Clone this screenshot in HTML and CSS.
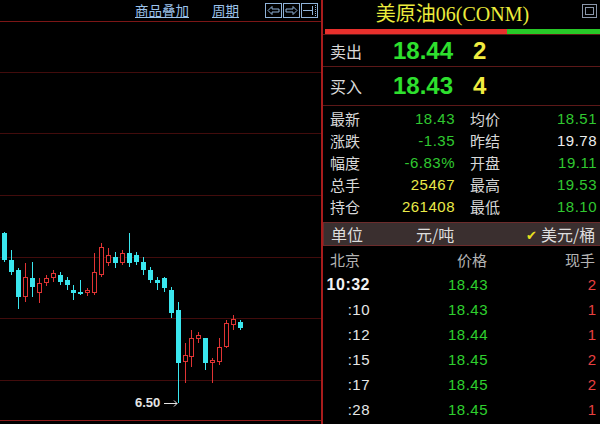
FILE: index.html
```html
<!DOCTYPE html>
<html lang="zh-CN">
  <head>
    <meta charset="UTF-8" />
    <meta name="viewport" content="width=device-width, initial-scale=1.0" />
    <title>美原油06 (CONM)</title>
    <link rel="stylesheet" href="styles.css">
  </head>
  <body>
    <div class="screen">
      <section class="chart">
        <div class="toolbar">
          <span class="tool-link">商品叠加</span>
          <span class="tool-link">周期</span>
          <div class="tool-btns">
            <span class="tool-btn">
              <svg viewBox="0 0 17 15"><rect x="0.5" y="0.5" width="16" height="14" /><path d="M3 7.5L7 3.5V6H14V9H7V11.5Z" /></svg>
            </span>
            <span class="tool-btn">
              <svg viewBox="0 0 17 15"><rect x="0.5" y="0.5" width="16" height="14" /><path d="M14 7.5L10 3.5V6H3V9H10V11.5Z" /></svg>
            </span>
            <span class="tool-btn">
              <svg viewBox="0 0 17 15"><rect x="0.5" y="0.5" width="16" height="14" /><path d="M2 7.5H11.5M11.5 3V12" /><path class="dots" d="M14.5 2V13" /></svg>
            </span>
          </div>
        </div>
        <!-- price plot, coordinates follow the page (y starts at 22) -->
        <svg class="plot" viewBox="0 22 321 402">
          <g class="grid">
            <line x1="0" x2="321" y1="72.5" y2="72.5" />
            <line x1="0" x2="321" y1="133.5" y2="133.5" />
            <line x1="0" x2="321" y1="195.5" y2="195.5" />
            <line x1="0" x2="321" y1="257.5" y2="257.5" />
            <line x1="0" x2="321" y1="318.5" y2="318.5" />
            <line x1="0" x2="321" y1="380.5" y2="380.5" />
          </g>
          <line class="axis" x1="0" x2="321" y1="420.5" y2="420.5" />
          <g id="candles"></g>
          <text class="low-mark" x="135" y="407">6.50</text>
          <path class="low-arrow" d="M164 403.5H177M174 400.5L177 403.5L174 406.5" />
        </svg>
      </section>

      <section class="quote">
        <header class="quote-head">
          <h1 class="quote-title">美原油06(CONM)</h1>
          <svg class="win-btn" viewBox="0 0 15 14"><rect x="0.5" y="0.5" width="14" height="13" /><rect x="3.5" y="3.5" width="8" height="7" /></svg>
        </header>
        <div class="ratio">
          <span class="ratio-sell" style="width: 182px"></span>
          <span class="ratio-buy"></span>
        </div>

        <div class="book">
          <div class="book-row sell">
            <span class="book-label">卖出</span>
            <span class="book-price">18.44</span>
            <span class="book-vol">2</span>
          </div>
          <div class="book-row buy">
            <span class="book-label">买入</span>
            <span class="book-price">18.43</span>
            <span class="book-vol">4</span>
          </div>
        </div>

        <div class="stats">
          <span class="stat-label">最新</span><span class="stat-val green">18.43</span>
          <span class="stat-label right">均价</span><span class="stat-val green">18.51</span>
          <span class="stat-label">涨跌</span><span class="stat-val green">-1.35</span>
          <span class="stat-label right">昨结</span><span class="stat-val white">19.78</span>
          <span class="stat-label">幅度</span><span class="stat-val green">-6.83%</span>
          <span class="stat-label right">开盘</span><span class="stat-val green">19.11</span>
          <span class="stat-label">总手</span><span class="stat-val yellow">25467</span>
          <span class="stat-label right">最高</span><span class="stat-val green">19.53</span>
          <span class="stat-label">持仓</span><span class="stat-val yellow">261408</span>
          <span class="stat-label right">最低</span><span class="stat-val green">18.10</span>
        </div>

        <div class="unit-row">
          <span class="unit-label">单位</span>
          <span class="unit-opt">元/吨</span>
          <span class="unit-check">✔</span>
          <span class="unit-opt">美元/桶</span>
        </div>

        <div class="ticks">
          <div class="tick-head">
            <span class="th-time">北京</span>
            <span class="th-price">价格</span>
            <span class="th-vol">现手</span>
          </div>
          <div class="tick-row first"><span class="t-time">10:32</span><span class="t-price">18.43</span><span class="t-vol">2</span></div>
          <div class="tick-row"><span class="t-time">:10</span><span class="t-price">18.43</span><span class="t-vol">1</span></div>
          <div class="tick-row"><span class="t-time">:12</span><span class="t-price">18.44</span><span class="t-vol">1</span></div>
          <div class="tick-row"><span class="t-time">:15</span><span class="t-price">18.45</span><span class="t-vol">2</span></div>
          <div class="tick-row"><span class="t-time">:17</span><span class="t-price">18.45</span><span class="t-vol">2</span></div>
          <div class="tick-row"><span class="t-time">:28</span><span class="t-price">18.45</span><span class="t-vol">1</span></div>
        </div>
      </section>
    </div>

    <script>
      // [x, bodyTop, bodyBottom, high, low, up]
      const candles = [
        [4, 233, 260, 232, 262, 0],
        [11, 260, 272, 250, 275, 0],
        [18, 270, 297, 268, 309, 0],
        [25, 277, 297, 263, 302, 1],
        [32, 278, 287, 262, 297, 0],
        [39, 283, 293, 278, 303, 1],
        [46, 278, 283, 275, 286, 1],
        [53, 273, 278, 270, 282, 1],
        [60, 275, 282, 272, 285, 0],
        [67, 280, 285, 277, 290, 0],
        [73, 290, 293, 285, 300, 0],
        [80, 292, 294, 280, 295, 0],
        [87, 290, 293, 288, 296, 1],
        [94, 272, 293, 253, 295, 1],
        [101, 247, 275, 243, 277, 1],
        [108, 255, 263, 248, 266, 1],
        [115, 257, 263, 252, 268, 0],
        [122, 253, 263, 250, 265, 1],
        [129, 253, 263, 233, 267, 0],
        [136, 255, 262, 252, 265, 0],
        [143, 262, 270, 257, 275, 0],
        [150, 270, 280, 267, 283, 0],
        [157, 280, 283, 277, 290, 0],
        [164, 278, 288, 277, 292, 0],
        [171, 290, 313, 287, 318, 0],
        [178, 310, 363, 302, 403, 0],
        [185, 355, 362, 343, 383, 1],
        [191, 338, 357, 330, 367, 1],
        [198, 335, 339, 332, 343, 1],
        [205, 338, 363, 338, 370, 0],
        [212, 360, 363, 358, 383, 1],
        [219, 347, 362, 338, 365, 1],
        [226, 323, 347, 320, 348, 1],
        [233, 319, 325, 315, 330, 1],
        [240, 322, 328, 320, 330, 0]
      ];

      const ns = "http://www.w3.org/2000/svg";
      const group = document.getElementById("candles");

      function add(tag, attrs) {
        const el = document.createElementNS(ns, tag);
        for (const k in attrs) el.setAttribute(k, attrs[k]);
        group.appendChild(el);
      }

      candles.forEach(([x, top, bottom, high, low, up]) => {
        const cls = up ? "up" : "down";
        const h = Math.max(bottom - top, 1);
        if (up) {
          add("line", { class: cls, x1: x + 0.5, x2: x + 0.5, y1: high, y2: top });
          add("line", { class: cls, x1: x + 0.5, x2: x + 0.5, y1: top + h, y2: low });
          add("rect", { class: cls, x: x - 1.5, y: top + 0.5, width: 4, height: h - 1 });
        } else {
          add("line", { class: cls, x1: x + 0.5, x2: x + 0.5, y1: high, y2: low });
          add("rect", { class: cls, x: x - 2, y: top, width: 5, height: h });
        }
      });
    </script>
  </body>
</html>
```

FILE: styles.css
```css
body {
  margin: 0;
  background: #000;
  font-family: "Liberation Sans", "Noto Sans CJK SC", sans-serif;
  color: #dcdcdc;
}

.screen {
  display: flex;
  width: 600px;
  height: 424px;
  overflow: hidden;
}

/* left: chart */
.chart {
  flex: none;
  width: 321px;
  border-right: 2px solid #a81c1c;
}

.toolbar {
  height: 21px;
  border-bottom: 1px solid #7c1616;
  display: flex;
  align-items: center;
  justify-content: flex-end;
  padding-right: 3px;
}

.tool-link {
  color: #9cc2ea;
  font-family: "Noto Sans CJK SC", sans-serif;
  font-size: 13.5px;
  line-height: 1;
  text-decoration: underline;
}

.tool-link + .tool-link {
  margin-left: 23px;
}

.tool-btns {
  display: flex;
  gap: 1px;
  margin-left: 26px;
}

.tool-btn svg {
  display: block;
  width: 17px;
  height: 15px;
  fill: none;
  stroke: #8fb2d8;
  stroke-width: 1;
}

.tool-btn .dots {
  stroke-dasharray: 1 1;
}

.plot {
  display: block;
  width: 321px;
  height: 402px;
}

.grid line {
  stroke: #420c0c;
  stroke-width: 1;
}

.axis {
  stroke: #8c1a1a;
  stroke-width: 1;
}

line.down {
  stroke: #3ae6ee;
}

rect.down {
  fill: #3ae6ee;
}

line.up {
  stroke: #e03434;
}

rect.up {
  fill: #000;
  stroke: #e03434;
  stroke-width: 1;
}

.low-mark {
  fill: #e4e4e4;
  font-family: "Liberation Sans", sans-serif;
  font-size: 13px;
  font-weight: bold;
}

.low-arrow {
  fill: none;
  stroke: #e4e4e4;
  stroke-width: 1;
}

/* right: quote panel */
.quote {
  flex: 1;
  min-width: 0;
  display: flex;
  flex-direction: column;
  white-space: nowrap;
}

.quote-head {
  height: 28px;
  display: flex;
  align-items: center;
  padding-right: 3px;
}

.quote-title {
  flex: 1;
  margin: 0;
  text-align: center;
  font-family: "Liberation Serif", "Noto Sans CJK SC", serif;
  font-size: 20px;
  font-weight: normal;
  color: #ecec3c;
  line-height: 1;
}

.win-btn {
  width: 15px;
  height: 14px;
  fill: none;
  stroke: #8a96aa;
  margin-bottom: 6px;
}

.ratio {
  height: 5px;
  display: flex;
  margin: 1px 0 0 2px;
}

.ratio-sell {
  background: #e8302c;
}

.ratio-buy {
  flex: 1;
  background: #28c828;
}

.book {
  border-top: 1px solid #5c1818;
}

.book-row {
  display: grid;
  grid-template-columns: 63px 80px auto;
  align-items: center;
  padding-left: 7px;
  border-bottom: 1px solid #5c1818;
}

.book-row.sell {
  height: 31px;
}

.book-row.buy {
  height: 38px;
}

.book-label {
  font-family: "Noto Sans CJK SC", sans-serif;
  font-size: 16px;
  color: #dadada;
}

.book-price {
  font-size: 24px;
  font-weight: bold;
  color: #2ee02e;
}

.book-vol {
  font-size: 24px;
  font-weight: bold;
  color: #f0ec40;
}

.stats {
  display: grid;
  grid-template-columns: 50px 75px 65px 1fr;
  grid-auto-rows: 22px;
  align-items: center;
  padding: 1px 3px 0 7px;
}

.stat-label {
  font-family: "Noto Sans CJK SC", sans-serif;
  font-size: 15px;
  color: #d8d8d8;
}

.stat-label.right {
  padding-left: 15px;
}

.stat-val {
  text-align: right;
  font-size: 15px;
  letter-spacing: 0.5px;
}

.green {
  color: #30c830;
}

.white {
  color: #ececec;
}

.yellow {
  color: #eaea48;
}

.unit-row {
  height: 22px;
  margin-top: 5px;
  display: flex;
  align-items: center;
  padding-left: 7px;
  background: #3a2f2f;
  border: 1px solid #6c2c2c;
  border-right: none;
  font-family: "Noto Sans CJK SC", sans-serif;
  font-size: 16px;
  color: #dedede;
}

.unit-label {
  width: 85px;
}

.unit-opt:nth-child(2) {
  width: 110px;
}

.unit-check {
  width: 15px;
  color: #e8e020;
  font-size: 13px;
}

.tick-head,
.tick-row {
  display: grid;
  grid-template-columns: 47px 190px 1fr;
  align-items: center;
  padding-right: 4px;
}

.tick-head {
  height: 26px;
  font-family: "Noto Sans CJK SC", sans-serif;
  font-size: 15px;
  color: #b4b4b4;
}

.th-time {
  padding-left: 7px;
}

.th-price {
  text-align: center;
  padding-left: 14px;
}

.th-vol {
  text-align: right;
  padding-right: 1px;
}

.tick-row {
  height: 25px;
}

.t-time {
  text-align: right;
  font-size: 15px;
  color: #e6e6e6;
  letter-spacing: 0.5px;
}

.tick-row.first .t-time {
  font-size: 16px;
  font-weight: bold;
  color: #f2f2f2;
}

.t-price {
  text-align: center;
  padding-left: 6px;
  font-size: 15px;
  letter-spacing: 0.5px;
  color: #2ed02e;
}

.t-vol {
  text-align: right;
  font-size: 15px;
  color: #e84040;
}
```
